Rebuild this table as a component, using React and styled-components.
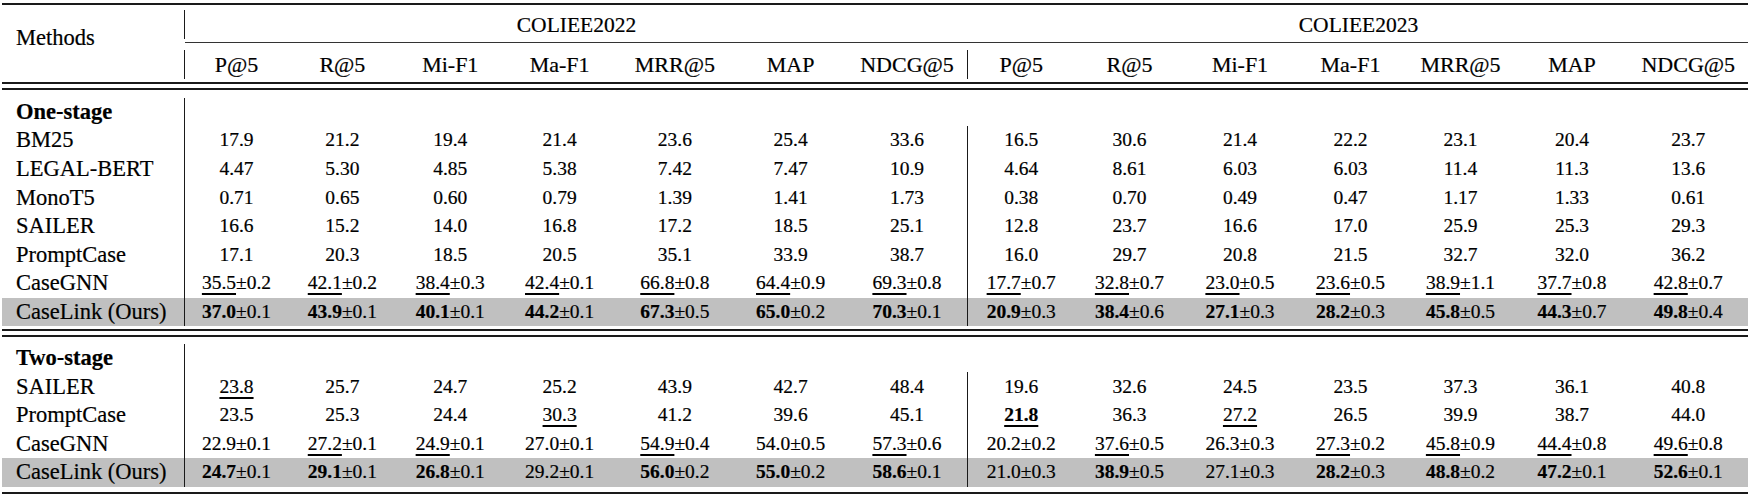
import styled, { createGlobalStyle } from "styled-components";

const GlobalStyle = createGlobalStyle`
  body {
    margin: 0;
    background: #fff;
    color: #000;
    font-family: "Liberation Serif", "Times New Roman", serif;
  }
`;

// column widths measured from the header label centres
const widths = [104, 108.75, 107, 111.75, 118.75, 112.75, 120, 107.5, 110, 111, 110, 110, 113, 119.5];
const gridCols = `182px ${widths.map((w) => w + "px").join(" ")}`;

const metrics = ["P@5", "R@5", "Mi-F1", "Ma-F1", "MRR@5", "MAP", "NDCG@5"];

const groups = [
  {
    title: "One-stage",
    rows: [
      ["BM25", "17.9 21.2 19.4 21.4 23.6 25.4 33.6 16.5 30.6 21.4 22.2 23.1 20.4 23.7"],
      ["LEGAL-BERT", "4.47 5.30 4.85 5.38 7.42 7.47 10.9 4.64 8.61 6.03 6.03 11.4 11.3 13.6"],
      ["MonoT5", "0.71 0.65 0.60 0.79 1.39 1.41 1.73 0.38 0.70 0.49 0.47 1.17 1.33 0.61"],
      ["SAILER", "16.6 15.2 14.0 16.8 17.2 18.5 25.1 12.8 23.7 16.6 17.0 25.9 25.3 29.3"],
      ["PromptCase", "17.1 20.3 18.5 20.5 35.1 33.9 38.7 16.0 29.7 20.8 21.5 32.7 32.0 36.2"],
      ["CaseGNN", "u:35.5±0.2 u:42.1±0.2 u:38.4±0.3 u:42.4±0.1 u:66.8±0.8 u:64.4±0.9 u:69.3±0.8 u:17.7±0.7 u:32.8±0.7 u:23.0±0.5 u:23.6±0.5 u:38.9±1.1 u:37.7±0.8 u:42.8±0.7"],
      ["CaseLink (Ours)", "b:37.0±0.1 b:43.9±0.1 b:40.1±0.1 b:44.2±0.1 b:67.3±0.5 b:65.0±0.2 b:70.3±0.1 b:20.9±0.3 b:38.4±0.6 b:27.1±0.3 b:28.2±0.3 b:45.8±0.5 b:44.3±0.7 b:49.8±0.4", true],
    ],
  },
  {
    title: "Two-stage",
    rows: [
      ["SAILER", "u:23.8 25.7 24.7 25.2 43.9 42.7 48.4 19.6 32.6 24.5 23.5 37.3 36.1 40.8"],
      ["PromptCase", "23.5 25.3 24.4 u:30.3 41.2 39.6 45.1 bu:21.8 36.3 u:27.2 26.5 39.9 38.7 44.0"],
      ["CaseGNN", "22.9±0.1 u:27.2±0.1 u:24.9±0.1 27.0±0.1 u:54.9±0.4 54.0±0.5 u:57.3±0.6 20.2±0.2 u:37.6±0.5 26.3±0.3 u:27.3±0.2 u:45.8±0.9 u:44.4±0.8 u:49.6±0.8"],
      ["CaseLink (Ours)", "b:24.7±0.1 b:29.1±0.1 b:26.8±0.1 29.2±0.1 b:56.0±0.2 b:55.0±0.2 b:58.6±0.1 21.0±0.3 b:38.9±0.5 27.1±0.3 b:28.2±0.3 b:48.8±0.2 b:47.2±0.1 b:52.6±0.1", true],
    ],
  },
];

const Page = styled.div`
  padding: 3px 4px 0 2px;
`;

const Table = styled.div`
  width: 1746px;
  border-top: 2px solid #1a1a1a;
  font-family: "Liberation Serif", "Times New Roman", serif;
  color: #000;
  -webkit-text-stroke: 0.2px #000;
`;

const Header = styled.div`
  display: grid;
  grid-template-columns: ${gridCols};
  grid-template-rows: 37px 1px 39px;
`;

const MethodsHead = styled.div`
  grid-row: 1 / span 3;
  grid-column: 1;
  display: flex;
  align-items: center;
  padding: 0 0 11px 14px;
  font-size: 22.5px;
`;

const GroupBar = styled.div`
  grid-row: 1;
  grid-column: 2 / -1;
  display: grid;
  grid-template-columns: 783px 781px;
  align-items: center;
  margin: 5px 0 3px;
  border-left: 1px solid #1a1a1a;
`;

const GroupTitle = styled.div`
  text-align: center;
  font-size: 21.5px;
  padding-top: 1px;
`;

const CMidRule = styled.div`
  grid-row: 2;
  grid-column: 2 / -1;
  background: #333;
  margin-left: 1px;
`;

const HeadCell = styled.div`
  grid-row: 3;
  display: flex;
  align-items: center;
  justify-content: center;
  margin: 7px 0 3px;
  font-size: 22px;
  border-left: ${(p) => (p.$sep ? "1px solid #1a1a1a" : "none")};
`;

const DoubleRule = styled.div`
  height: 4px;
  border-top: 2px solid #1a1a1a;
  border-bottom: 2px solid #1a1a1a;
  margin: ${(p) => p.$margin};
`;

const Row = styled.div`
  display: grid;
  grid-template-columns: ${gridCols};
  height: 28.6px;
  align-items: center;
  background: ${(p) => (p.$hl ? "#c0c0c0" : "transparent")};
`;

const MethodCell = styled.div`
  padding-left: 14px;
  font-size: 22.5px;
  font-weight: ${(p) => (p.$title ? 700 : 400)};
  white-space: nowrap;
`;

const Cell = styled.div`
  height: 100%;
  display: flex;
  align-items: center;
  justify-content: center;
  font-size: 19.5px;
  white-space: nowrap;
  border-left: ${(p) => (p.$sep ? "1px solid #1a1a1a" : "none")};
`;

const Blank = styled.div`
  grid-column: 2 / -1;
  height: 100%;
  border-left: 1px solid #1a1a1a;
`;

const Num = styled.span`
  font-weight: ${(p) => (p.$b ? 700 : 400)};
  text-decoration: ${(p) => (p.$u ? "underline" : "none")};
  text-decoration-thickness: 1.5px;
  text-underline-offset: 4px;
`;

const BottomRule = styled.div`
  margin-top: 5px;
  border-top: 2px solid #1a1a1a;
`;

const Value = ({ raw }) => {
  let flags = "";
  let text = raw;
  if (raw.includes(":")) [flags, text] = raw.split(":");
  const [main, pm] = text.split("±");
  return (
    <>
      <Num $b={flags.includes("b")} $u={flags.includes("u")}>{main}</Num>
      {pm && <span>±{pm}</span>}
    </>
  );
};

const Section = ({ group }) => (
  <div>
    <Row>
      <MethodCell $title>{group.title}</MethodCell>
      <Blank />
    </Row>
    {group.rows.map(([name, vals, hl]) => (
      <Row key={name} $hl={hl}>
        <MethodCell>{name}</MethodCell>
        {vals.split(" ").map((v, i) => (
          <Cell key={i} $sep={i === 0 || i === 7}>
            <Value raw={v} />
          </Cell>
        ))}
      </Row>
    ))}
  </div>
);

export default function App() {
  return (
    <Page>
      <GlobalStyle />
      <Table>
        <Header>
          <MethodsHead>Methods</MethodsHead>
          <GroupBar>
            <GroupTitle>COLIEE2022</GroupTitle>
            <GroupTitle>COLIEE2023</GroupTitle>
          </GroupBar>
          <CMidRule />
          {[...metrics, ...metrics].map((m, i) => (
            <HeadCell key={i} $sep={i === 0 || i === 7}>
              {m}
            </HeadCell>
          ))}
        </Header>
        <DoubleRule $margin="0 0 7.5px" />
        <Section group={groups[0]} />
        <DoubleRule $margin="3px 0 6.4px" />
        <Section group={groups[1]} />
        <BottomRule />
      </Table>
    </Page>
  );
}
